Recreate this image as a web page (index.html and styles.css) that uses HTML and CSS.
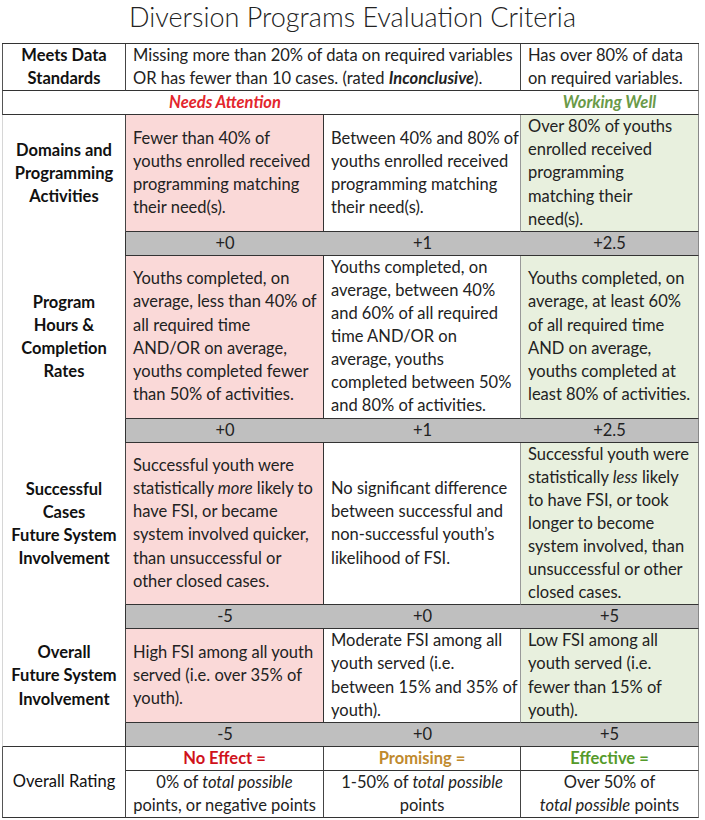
FILE: index.html
```html
<!DOCTYPE html>
<html>
<head>
    <meta charset="UTF-8">
    <title>Diversion Programs Evaluation Criteria</title>
    <link rel="stylesheet" href="styles.css">
</head>
<body>
<h1 class="title">Diversion Programs Evaluation Criteria</h1>
<table class="criteria">
    <colgroup>
        <col class="c-label">
        <col class="c-low">
        <col class="c-mid">
        <col class="c-high">
    </colgroup>
    <tr class="standards">
        <th>Meets Data<br>Standards</th>
        <td colspan="2">Missing more than 20% of data on required variables<br>OR has fewer than 10 cases. (rated <b><i>Inconclusive</i></b>).</td>
        <td class="right">Has over 80% of data<br>on required variables.</td>
    </tr>
    <tr class="ratings">
        <th></th>
        <td class="needs">Needs Attention</td>
        <td></td>
        <td class="working right">Working Well</td>
    </tr>
    <tr class="criterion first">
        <th>Domains and<br>Programming<br>Activities</th>
        <td class="low">Fewer than 40% of<br>youths enrolled received<br>programming matching<br>their need(s).</td>
        <td class="mid">Between 40% and 80% of<br>youths enrolled received<br>programming matching<br>their need(s).</td>
        <td class="high right">Over 80% of youths<br>enrolled received<br>programming<br>matching their<br>need(s).</td>
    </tr>
    <tr class="score">
        <th></th><td>+0</td><td>+1</td><td class="right">+2.5</td>
    </tr>
    <tr class="criterion">
        <th>Program<br>Hours &amp;<br>Completion<br>Rates</th>
        <td class="low">Youths completed, on<br>average, less than 40% of<br>all required time<br>AND/OR on average,<br>youths completed fewer<br>than 50% of activities.</td>
        <td class="mid">Youths completed, on<br>average, between 40%<br>and 60% of all required<br>time AND/OR on<br>average, youths<br>completed between 50%<br>and 80% of activities.</td>
        <td class="high right">Youths completed, on<br>average, at least 60%<br>of all required time<br>AND on average,<br>youths completed at<br>least 80% of activities.</td>
    </tr>
    <tr class="score">
        <th></th><td>+0</td><td>+1</td><td class="right">+2.5</td>
    </tr>
    <tr class="criterion">
        <th>Successful<br>Cases<br>Future System<br>Involvement</th>
        <td class="low">Successful youth were<br>statistically <i>more</i> likely to<br>have FSI, or became<br>system involved quicker,<br>than unsuccessful or<br>other closed cases.</td>
        <td class="mid">No significant difference<br>between successful and<br>non-successful youth’s<br>likelihood of FSI.</td>
        <td class="high right">Successful youth were<br>statistically <i>less</i> likely<br>to have FSI, or took<br>longer to become<br>system involved, than<br>unsuccessful or other<br>closed cases.</td>
    </tr>
    <tr class="score">
        <th></th><td>-5</td><td>+0</td><td class="right">+5</td>
    </tr>
    <tr class="criterion">
        <th>Overall<br>Future System<br>Involvement</th>
        <td class="low">High FSI among all youth<br>served (i.e. over 35% of<br>youth).</td>
        <td class="mid">Moderate FSI among all<br>youth served (i.e.<br>between 15% and 35% of<br>youth).</td>
        <td class="high right">Low FSI among all<br>youth served (i.e.<br>fewer than 15% of<br>youth).</td>
    </tr>
    <tr class="score last">
        <th></th><td>-5</td><td>+0</td><td class="right">+5</td>
    </tr>
    <tr class="overall-head">
        <th rowspan="2" class="overall-label">Overall Rating</th>
        <td class="no-effect">No Effect =</td>
        <td class="promising">Promising =</td>
        <td class="effective right">Effective =</td>
    </tr>
    <tr class="overall">
        <td>0% of <i>total possible</i><br>points, or negative points</td>
        <td>1-50% of <i>total possible</i><br>points</td>
        <td class="right">Over 50% of<br><i>total possible</i> points</td>
    </tr>
</table>
</body>
</html>
```

FILE: styles.css
```css
*{margin:0;padding:0;}
body{background:#fff;color:#222;font-family:Lato,"Open Sans",sans-serif;}
.title{font-weight:300;font-size:27px;line-height:34px;padding-bottom:9px;text-align:center;color:#222;}

.criteria{margin-left:2px;width:697px;table-layout:fixed;border-collapse:separate;border-spacing:0;border-top:1px solid #333;font-size:16.5px;line-height:23.1px;}
.c-label{width:124px;}
.c-low{width:198px;}
.c-mid{width:197px;}
.c-high{width:178px;}

.criteria th,.criteria td{padding:0 7px;white-space:nowrap;vertical-align:middle;border-right:1px solid #444;border-bottom:1px solid #333;}
.criteria th{font-weight:700;text-align:center;color:#111;padding:0;border-left:1px solid #555;}
.criteria td{text-align:left;}
.criteria .right{border-right-color:#888;}

/* header rows */
.ratings td{border-right:none;text-align:center;font-weight:700;font-style:italic;}
.ratings th{border-right:none;}
.ratings td.right{border-right:1px solid #888;}
.needs{color:#e3262d;}
.working{color:#6a9a48;}

/* criteria rows */
.criterion th,.score th{border-bottom:none;border-left-color:#d6d6d6;}
.score.last th{border-bottom:1px solid #333;}
.criterion .low{background:#fad9d8;border-right-color:#333;}
.criterion .mid{border-right-color:#999;}
.criterion .high{background:#e8f0de;}
.score td{background:#bfbfbf;text-align:center;border-right:none;}
.score td.right{border-right:1px solid #888;}
.score th{border-right:1px solid #333;}

/* overall rating */
.overall-label{font-weight:400 !important;}
.overall-head td{text-align:center;font-weight:700;}
.overall td{text-align:center;}
.no-effect{color:#d0121b;}
.promising{color:#c08a2e;}
.effective{color:#559a2a;}
```
